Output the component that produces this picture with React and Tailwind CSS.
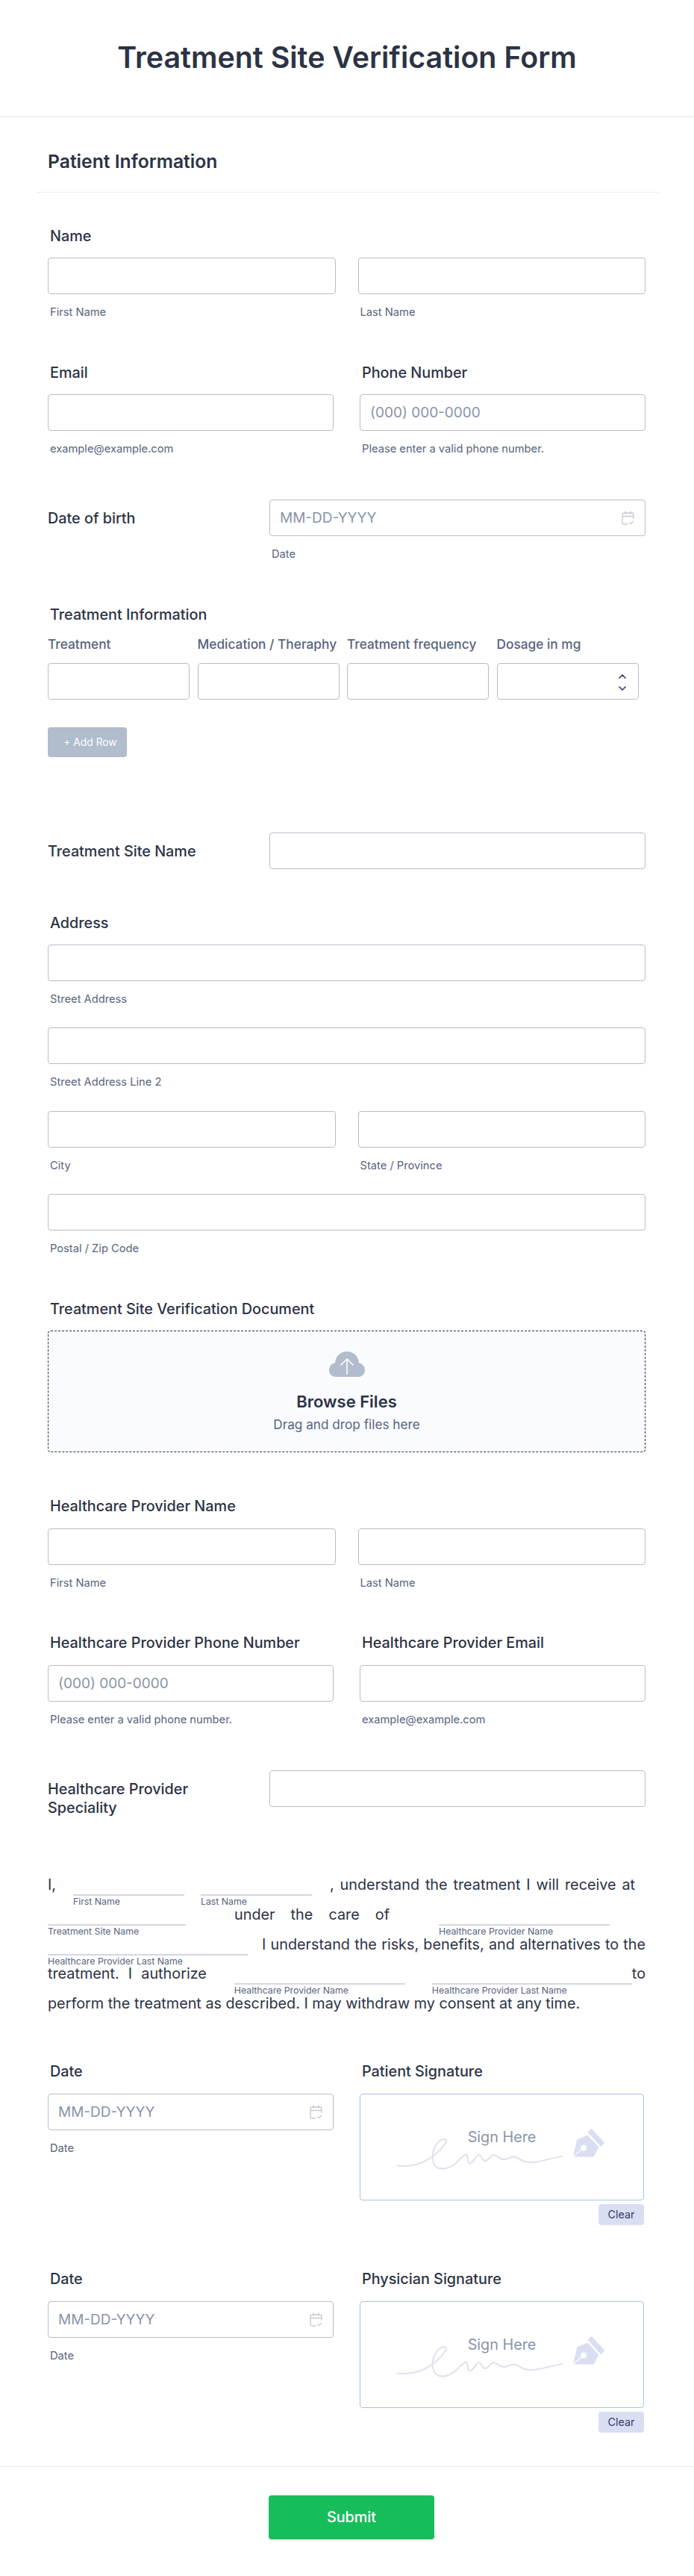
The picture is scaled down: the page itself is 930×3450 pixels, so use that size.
import { ChevronUp, ChevronDown } from 'lucide-react'

const inputCls =
  'block w-full h-[49px] px-[13px] rounded-[4px] border border-[#b8bdc9] bg-white text-[19px] text-[#2c3345] placeholder:text-[#8894ab] outline-none'

function Label({ children, className = '' }) {
  return (
    <div className={`text-[19.8px] leading-[24px] font-[450] text-[#2c3345] ${className}`}>
      {children}
    </div>
  )
}

function Sub({ children, className = '' }) {
  return (
    <div className={`mt-[16px] ml-[3px] text-[14.7px] leading-[16px] text-[#57647e] ${className}`}>
      {children}
    </div>
  )
}

function Input({ placeholder, className = '' }) {
  return <input className={`${inputCls} ${className}`} placeholder={placeholder} />
}

function CalendarIcon() {
  return (
    <svg width="17" height="19" viewBox="0 0 17 19" fill="none" stroke="#c5cad6" strokeWidth="1.400" className="absolute right-[15px] top-[15px]">
      <path d="M8 18H3a2 2 0 0 1-2-2V5a2 2 0 0 1 2-2h11a2 2 0 0 1 2 2v6" />
      <path d="M1 7.500h15M5 .5v4M12 .5v4" />
      <path d="M10.500 15.500l2 2 3.500-3.500" />
    </svg>
  )
}

function DateInput() {
  return (
    <div className="relative">
      <Input placeholder="MM-DD-YYYY" />
      <CalendarIcon />
    </div>
  )
}

function Pair({ left, right, leftSub, rightSub, placeholderL, placeholderR, wide, tall }) {
  const labelCls = tall ? 'ml-[3px] mb-[18px]' : 'ml-[3px] mb-[17px]'
  return (
    <div className={`flex ${wide ? 'gap-[30px]' : 'gap-[35px]'}`}>
      <div className="flex-1">
        {left && <Label className={labelCls}>{left}</Label>}
        <Input placeholder={placeholderL} />
        <Sub>{leftSub}</Sub>
      </div>
      <div className="flex-1">
        {left && <Label className={labelCls}>{right || '\u00a0'}</Label>}
        <Input placeholder={placeholderR} />
        <Sub>{rightSub}</Sub>
      </div>
    </div>
  )
}

function Field({ w, label, className = '' }) {
  return (
    <div className={`${w} ${className} shrink-0`}>
      <div className="h-[35px] border-b-2 border-[#d3d6e5]" />
      <div className="mt-[1px] text-[12.3px] leading-[14px] text-[#57647e] whitespace-nowrap">{label}</div>
    </div>
  )
}

function Signature() {
  return (
    <svg width="282" height="58" viewBox="150 175 845 175" fill="none" className="absolute left-[48px] top-[44px]">
      <path
        d="M152 330c40 6 90-2 135-32 30-20 62-55 62-68 0-12-25-8-40 15-16 24-22 62-5 85 16 20 52 14 78-5 18-14 38-42 48-40 10 2 2 36 15 36 14 0 24-34 36-34 12 0 12 26 26 24 14-2 24-26 36-24 14 2 22 18 40 18 18 0 28-14 44-10 18 5 30 22 60 22 50 0 70-15 130-24"
        stroke="#dde1f0"
        strokeWidth="6"
        strokeLinecap="round"
      />
      <path d="M862 294l16-69 42-18 46 48-21 40z" fill="#dadef0" />
      <path d="M921 195l15-15 54 58-15 16z" fill="#dadef0" />
      <circle cx="905" cy="258" r="12" fill="#fff" />
      <path d="M860 296l38-32" stroke="#fff" strokeWidth="4" />
    </svg>
  )
}

function SignatureBox({ label }) {
  return (
    <div className="w-[381px]">
      <Label className="ml-[3px] mb-[18px]">{label}</Label>
      <div className="relative h-[143px] rounded-[4px] border border-[#a9c0e3] bg-white flex justify-center">
        <span className="mt-[42px] text-[19.8px] leading-[30px] text-[#8894ab]">Sign Here</span>
        <Signature />
      </div>
      <div className="flex justify-end mt-[5px]">
        <button className="w-[61px] h-[28px] rounded-[4px] bg-[#dadef3] text-[14.3px] text-[#343c6a]">Clear</button>
      </div>
    </div>
  )
}

function DateSignature({ label, className = '' }) {
  return (
    <div className={`flex gap-[35px] ${className}`}>
      <div className="w-[383px]">
        <Label className="ml-[3px] mb-[18px]">Date</Label>
        <DateInput />
        <Sub>Date</Sub>
      </div>
      <SignatureBox label={label} />
    </div>
  )
}

export default function App() {
  return (
    <div className="bg-white min-h-[3450px] [font-family:Inter,sans-serif]">
      <header className="h-[157px] border-b border-[#e3e5f0] flex items-center justify-center">
        <h1 className="text-[39.4px] leading-[44px] font-semibold text-[#2c3345] -mt-[2px]">
          Treatment Site Verification Form
        </h1>
      </header>

      <div className="mx-[47px] pt-[43px] pb-[25px] pl-[17px] border-b border-[#eceef6]">
        <h2 className="text-[24.7px] leading-[32px] font-semibold text-[#2c3345]">Patient Information</h2>
      </div>

      <main className="pl-[64px] pr-[65px]">
        <div className="mt-[46px]">
          <Pair left="Name" leftSub="First Name" rightSub="Last Name" wide />
        </div>

        <div className="mt-[61px]">
          <Pair left="Email" right="Phone Number" leftSub="example@example.com" rightSub="Please enter a valid phone number." placeholderR="(000) 000-0000" />
        </div>

        <div className="mt-[60px] flex">
          <Label className="w-[297px] mt-[13px]">Date of birth</Label>
          <div className="flex-1">
            <DateInput />
            <Sub>Date</Sub>
          </div>
        </div>

        <Label className="mt-[61px] ml-[3px]">Treatment Information</Label>
        <div className="mt-[16px] grid grid-cols-[190px_190px_190px_190px] gap-x-[10.500px]">
          {['Treatment', 'Medication / Theraphy', 'Treatment frequency', 'Dosage in mg'].map((h) => (
            <div key={h} className="text-[17.300px] leading-[24px] font-[450] text-[#57647e] whitespace-nowrap">{h}</div>
          ))}
          <Input className="mt-[13px]" />
          <Input className="mt-[13px]" />
          <Input className="mt-[13px]" />
          <div className="relative mt-[13px]">
            <Input />
            <div className="absolute right-[14px] top-[10px] flex flex-col text-[#343c6a]">
              <ChevronUp size={16} strokeWidth={2.5} />
              <ChevronDown size={16} strokeWidth={2.5} />
            </div>
          </div>
        </div>
        <button className="mt-[37px] block w-[106px] h-[40px] rounded-[4px] bg-[#b1bccd] pl-[8px] text-[13.8px] text-white">
          + Add Row
        </button>

        <div className="mt-[101px] flex items-center">
          <Label className="w-[297px]">Treatment Site Name</Label>
          <Input className="flex-1 w-auto" />
        </div>

        <Label className="mt-[60px] ml-[3px] mb-[17px]">Address</Label>
        <Input />
        <Sub>Street Address</Sub>
        <Input className="mt-[30px]" />
        <Sub>Street Address Line 2</Sub>
        <div className="mt-[31px]">
          <Pair leftSub="City" rightSub="State / Province" wide />
        </div>
        <Input className="mt-[30px]" />
        <Sub>Postal / Zip Code</Sub>

        <Label className="mt-[61px] ml-[3px] mb-[17px]">Treatment Site Verification Document</Label>
        <div className="h-[163px] rounded-[4px] border border-dashed border-[#2c3345] bg-[#fafbff] flex flex-col items-center">
          <svg width="48" height="34" viewBox="0 0 48 34" className="mt-[27px]">
            <path
              d="M9 34C3 34 0 29.500 0 25c0-5 3.500-9 8-9.500C8.500 7 15 0 24 0s15.500 7 16 15.500c4.500.5 8 4.500 8 9.500 0 4.500-3 9-9 9z"
              fill="#b1bccd"
            />
            <path d="M24 31V10M15.500 18.500L24 10l8.500 8.500" fill="none" stroke="#fff" strokeWidth="1.500" />
          </svg>
          <div className="mt-[21px] text-[22px] leading-[24px] font-semibold text-[#2c3345]">Browse Files</div>
          <div className="mt-[7px] text-[17.2px] leading-[24px] text-[#57647e]">Drag and drop files here</div>
        </div>

        <div className="mt-[60px]">
          <Pair left="Healthcare Provider Name" leftSub="First Name" rightSub="Last Name" wide tall />
        </div>
        <div className="mt-[60px]">
          <Pair left="Healthcare Provider Phone Number" right="Healthcare Provider Email" leftSub="Please enter a valid phone number." rightSub="example@example.com" placeholderL="(000) 000-0000" tall />
        </div>

        <div className="mt-[60px] flex">
          <Label className="w-[297px] mt-[13px] leading-[25px]">Healthcare Provider<br />Speciality</Label>
          <Input className="flex-1 w-auto" />
        </div>

        <div className="mt-[70px] text-[19.8px] leading-[40px] text-[#2c3345]">
          <div className="flex h-[40px] whitespace-nowrap">
            <span className="w-[34px]">I,</span>
            <Field w="w-[149px]" label="First Name" />
            <Field w="w-[149px]" className="ml-[22px]" label="Last Name" />
            <span className="ml-[24px] w-[409px] [text-align-last:justify]">, understand the treatment I will receive at</span>
          </div>
          <div className="flex h-[40px] whitespace-nowrap">
            <Field w="w-[185px]" label="Treatment Site Name" />
            <span className="ml-[65px] w-[208px] [text-align-last:justify]">under the care of</span>
            <Field w="w-[229px]" className="ml-[66px]" label="Healthcare Provider Name" />
          </div>
          <div className="flex h-[39px] whitespace-nowrap">
            <Field w="w-[268px]" label="Healthcare Provider Last Name" />
            <span className="ml-[19px] flex-1 [text-align-last:justify]">I understand the risks, benefits, and alternatives to the</span>
          </div>
          <div className="flex h-[40px] whitespace-nowrap">
            <span className="w-[213px] [text-align-last:justify]">treatment. I authorize</span>
            <Field w="w-[229px]" className="ml-[37px]" label="Healthcare Provider Name" />
            <Field w="w-[268px]" className="ml-[36px]" label="Healthcare Provider Last Name" />
            <span className="flex-1 text-right">to</span>
          </div>
          <div className="h-[40px] whitespace-nowrap">
            perform the treatment as described. I may withdraw my consent at any time.
          </div>
        </div>

        <DateSignature label="Patient Signature" className="mt-[59px]" />
        <DateSignature label="Physician Signature" className="mt-[60px]" />
      </main>

      <footer className="mt-[45px] border-t border-[#e3e5f0] pt-[38px] pl-[12px] flex justify-center">
        <button className="w-[222px] h-[59px] rounded-[4px] bg-[#18bd5b] text-[19.8px] font-medium text-white">Submit</button>
      </footer>
    </div>
  )
}
